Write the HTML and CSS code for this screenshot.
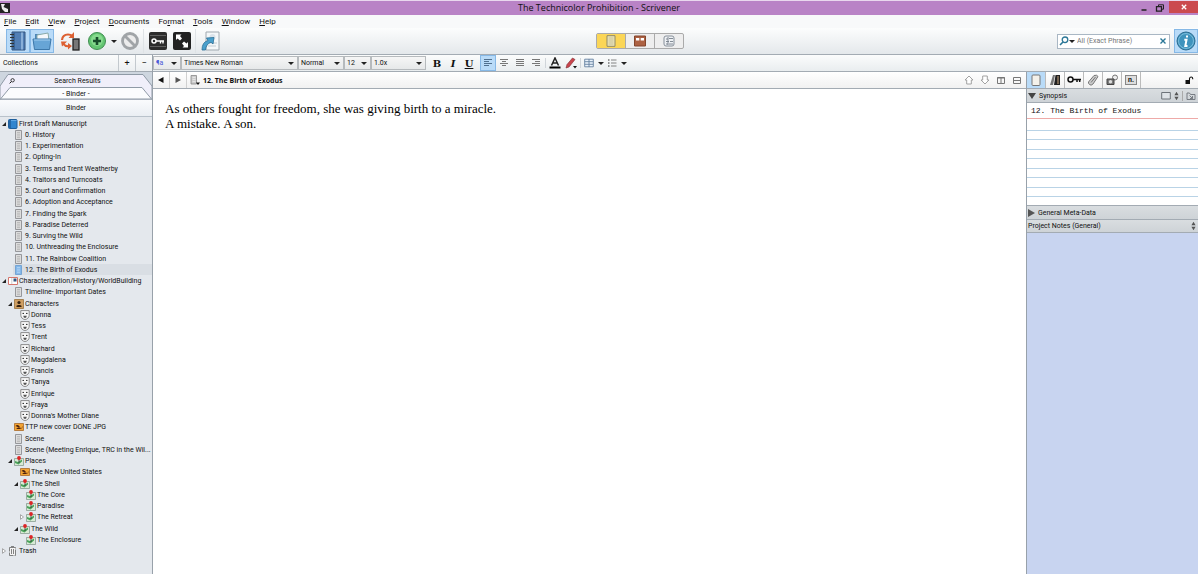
FILE: index.html
```
<!DOCTYPE html>
<html lang="en">
<head>
  <meta charset="UTF-8" />
  <meta name="viewport" content="width=device-width, initial-scale=1.0" />
  <title>The Technicolor Prohibition - Scrivener</title>
  <link rel="stylesheet" href="styles.css">
</head>
<body>
  <svg class="sprite" aria-hidden="true">
    <symbol id="i-doc" viewBox="0 0 10 10"><path d="M1.5.5h6v9h-6z" fill="#dcdcdc" stroke="#8d8f92" stroke-width=".9"/><path d="M3 2.5h3M3 4.2h3M3 5.9h3M3 7.6h3" stroke="#adadad" stroke-width=".7"/></symbol>
    <symbol id="i-doc-on" viewBox="0 0 10 10"><path d="M1.5.5h6v9h-6z" fill="#84b8ea" stroke="#6e9fd0" stroke-width=".9"/><path d="M3 2.5h3M3 4.2h3M3 5.9h3M3 7.6h3" stroke="#bddaf5" stroke-width=".7"/></symbol>
    <symbol id="i-draft" viewBox="0 0 10 10"><rect x=".5" y=".5" width="8.5" height="9" rx="1" fill="#3286cf" stroke="#1f5f9c"/><path d="M2 1v8" stroke="#174b80"/><path d="M3 1.5h5.500" stroke="#7ab9ee" stroke-width=".7"/></symbol>
    <symbol id="i-world" viewBox="0 0 10 10"><path d="M.5 1.500h9v7h-9z" fill="#fff" stroke="#d4756b"/><path d="M3.800 2v6" stroke="#bbb" stroke-width=".7"/><path d="M5.500 2.500h3v3h-3z" fill="#31557f"/></symbol>
    <symbol id="i-cast" viewBox="0 0 10 10"><path d="M.5.5h9v9h-9z" fill="#cf9f63" stroke="#99713c" stroke-width=".8"/><circle cx="5" cy="3.500" r="1.600" fill="#33200f"/><path d="M2.500 8V6.800L4 6h2l1.500.8V8z" fill="#33200f"/></symbol>
    <symbol id="i-mask" viewBox="0 0 10 10"><path d="M.8.6h8.400v4.700C9.200 7.500 7 9.500 5 9.500S.8 7.500.8 5.300z" fill="#f8f8f8" stroke="#808080" stroke-width=".9"/><path d="M2.500 3.400h1.500M6 3.400h1.500" stroke="#222"/><path d="M3.200 5.800h3.600Q6.500 8 5 8T3.200 5.800z" fill="#555"/></symbol>
    <symbol id="i-pic" viewBox="0 0 10 10"><path d="M.5 1.500h9v7h-9z" fill="#f2a434" stroke="#a8692a" stroke-width=".8"/><path d="M1.500 4q2-2 4 .5t3-.5v1.500H5zM2 7l2-1.500L8.500 7z" fill="#49200f"/></symbol>
    <symbol id="i-place" viewBox="0 0 10 10"><path d="M.5 2.500h9v7h-9z" fill="#d8ead5" stroke="#7d9486" stroke-width=".7"/><path d="M1 5l3 1 4-2.500v2L4.500 8.500 1 7z" fill="#4aa35b"/><path d="M5 3v4" stroke="#333" stroke-width=".8"/><circle cx="5" cy="2" r="1.900" fill="#dd2525"/></symbol>
    <symbol id="i-trash" viewBox="0 0 10 10"><path d="M1.500 1.500h6v8h-6z" fill="#f4f4f4" stroke="#666" stroke-width=".8" stroke-dasharray="7 1"/><path d="M3.500 3v5M5.500 3v5M3 .5h3" stroke="#666" stroke-width=".8"/></symbol>
    <symbol id="i-lens" viewBox="0 0 10 10"><circle cx="6" cy="3.800" r="2.800" fill="none" stroke="currentColor" stroke-width="1.300"/><path d="M4 6L1 9" stroke="currentColor" stroke-width="1.600"/></symbol>
    <symbol id="i-updown" viewBox="0 0 6 10"><path d="M3 0l2.500 4h-5zM3 10l2.500-4h-5z" fill="#555"/></symbol>
  </svg>

  <header class="titlebar">
    <svg class="app-icon" viewBox="0 0 10 10"><path d="M0 0h10v10H0z" fill="#222"/><path d="M1 1h4L3.500 4 8 6v3H5L2 6z" fill="#eee"/></svg>
    <h1>The Technicolor Prohibition - Scrivener</h1>
    <div class="window-buttons">
      <button aria-label="Minimize"><svg viewBox="0 0 10 10"><path d="M2.500 7h5" stroke="#222" stroke-width="1.500"/></svg></button>
      <button aria-label="Restore"><svg viewBox="0 0 10 10"><path d="M3.500 3V1.800h5v4.400H7" fill="none" stroke="#222"/><path d="M1.500 3.700h5v4.500h-5z" fill="none" stroke="#222" stroke-width="1.300"/></svg></button>
      <button class="close" aria-label="Close"><svg viewBox="0 0 10 10"><path d="M2.800 2.800l4.400 4.400M7.200 2.800L2.800 7.200" stroke="#fff" stroke-width="1.300"/></svg></button>
    </div>
  </header>

  <nav class="menubar">
    <a href="#"><u>F</u>ile</a>
    <a href="#"><u>E</u>dit</a>
    <a href="#"><u>V</u>iew</a>
    <a href="#"><u>P</u>roject</a>
    <a href="#"><u>D</u>ocuments</a>
    <a href="#">Fo<u>r</u>mat</a>
    <a href="#"><u>T</u>ools</a>
    <a href="#"><u>W</u>indow</a>
    <a href="#"><u>H</u>elp</a>
  </nav>

  <div class="toolbar">
    <div class="tools">
      <button class="tool on" aria-label="Binder"><svg viewBox="0 0 20 20"><path d="M4 1h13v18H4z" fill="#527fb5" stroke="#33557f"/><path d="M14 1.500v17" stroke="#89afd8" stroke-width="2"/><path d="M6 1.500v17" stroke="#3a6496" stroke-width="2"/><path d="M2 3.500h4M2 6.500h4M2 9.500h4M2 12.500h4M2 15.500h4" stroke="#333" stroke-width="1.200"/></svg></button>
      <button class="tool on" aria-label="Collections"><svg viewBox="0 0 20 20"><path d="M3 8V3h5l1.500 2H17v4z" fill="#4c86b8"/><path d="M5 4l11-2 1 7H5z" fill="#f5f8fb" stroke="#8aa"/><path d="M1 8h18l-1.500 10.500h-15z" fill="#67a5d6" stroke="#3d78aa"/><path d="M2 9h16" stroke="#a4d0f0"/></svg></button>
      <button class="tool sync" aria-label="Sync"><svg viewBox="0 0 20 20"><path d="M2 9q.5-5.500 6-5.500 2.500 0 4.500 1.500M10 15q-4.500 1-6.500-2" fill="none" stroke="#dd6032" stroke-width="2.200"/><path d="M14 1v6H8.500zM1 10.500h6L2 15.500zM8 12l4 3-4 3.500z" fill="#dd6032"/><rect x="13" y="8" width="6" height="11" fill="#777" stroke="#222" stroke-width="1.300"/></svg></button>
      <button class="tool add" aria-label="Add"><svg viewBox="0 0 20 20"><circle cx="10" cy="10" r="8.500" fill="#64c572" stroke="#3f8e50"/><circle cx="10" cy="9" r="6" fill="#86db8e"/><path d="M10 6v8M6 10h8" stroke="#174d2a" stroke-width="2.600"/></svg><i class="caret"></i></button>
      <button class="tool" aria-label="Trash"><svg viewBox="0 0 20 20"><circle cx="10" cy="10" r="7.500" fill="#ececec" stroke="#a0a4a7" stroke-width="2.800"/><path d="M4.500 4.500l11 11" stroke="#a0a4a7" stroke-width="2.800"/></svg></button>
      <span class="sep"></span>
      <button class="tool" aria-label="Keywords"><svg viewBox="0 0 20 20"><rect x="1" y="1" width="18" height="18" rx="2" fill="#2c2c2c"/><path d="M2 4.500h16M2 15.500h16" stroke="#777" stroke-width=".7"/><circle cx="6" cy="10" r="2" fill="none" stroke="#fff" stroke-width="1.500"/><path d="M8 10h8M12.500 10v2.500M15 10v2.500" stroke="#fff" stroke-width="1.400"/></svg></button>
      <button class="tool" aria-label="Full screen"><svg viewBox="0 0 20 20"><rect x="1" y="1" width="18" height="18" rx="2" fill="#222"/><path d="M4 3.500h5.500L8 5l2 2.500L8 9.500 5.500 7.500 4 9zM16 16.500h-5.500L12 15l-2-2.500 2-2 2.500 2L16 11z" fill="#fff"/></svg></button>
      <span class="sep"></span>
      <button class="tool" aria-label="Compile"><svg viewBox="0 0 20 20"><path d="M6 1h13v18H6z" fill="#f4f7f9" stroke="#a0a9b0"/><circle cx="12.500" cy="6" r="3" fill="#dbe3ea"/><path d="M8 15h8M10 12h7" stroke="#c3ccd3"/><path d="M2 19q0-8 6-9.500L6.500 7 14 6.500 13 13l-2-1.800Q6 13 5.500 19z" fill="#4aa0cd" stroke="#286d96" stroke-width=".8"/></svg></button>
    </div>

    <div class="view-modes">
      <button class="on" aria-label="Document"><svg viewBox="0 0 12 12"><path d="M2 .7h8v10.600H2z" fill="#eee6b8" stroke="#8f8966"/><path d="M3.500 3h5M3.500 5h5M3.500 7h5M3.500 9h5" stroke="#b9b594" stroke-width=".8"/></svg></button>
      <button aria-label="Corkboard"><svg viewBox="0 0 12 12"><path d="M.5 1h11v10H.5z" fill="#ad6142" stroke="#83452c"/><path d="M2 3h3.300v2.500H2zM6.700 3H10v2.500H6.700z" fill="#fff"/></svg></button>
      <button aria-label="Outliner"><svg viewBox="0 0 12 12"><rect x="1" y="1" width="10" height="10" rx="2" fill="#eef1f4" stroke="#87909a"/><path d="M3 4h2M6 3.500h4M3 6.500h3M7 6.500h3M3 9h2M6 9h4M5 2v8" stroke="#76808b" stroke-width=".9"/></svg></button>
    </div>

    <div class="search-side">
      <label class="search">
        <svg class="ico" viewBox="0 0 10 10"><use href="#i-lens"/></svg><i class="caret"></i>
        <input type="text" placeholder="All (Exact Phrase)" aria-label="Search" />
        <button aria-label="Clear"><svg viewBox="0 0 10 10"><path d="M2.500 2.500l5 5M7.500 2.500l-5 5" stroke="#2b7797" stroke-width="1.400"/></svg></button>
      </label>
      <button class="tool on" aria-label="Inspector"><svg viewBox="0 0 20 20"><circle cx="10" cy="10" r="9" fill="#3f93bd" stroke="#2a6c91"/><circle cx="10" cy="10" r="7.500" fill="none" stroke="#8ac6e2" stroke-width=".8"/><path d="M11 4.500v2M8.300 8.800h2.200L9.300 15h2.200" fill="none" stroke="#fff" stroke-width="2"/></svg></button>
    </div>
  </div>

  <div class="workspace">
    <aside class="binder">
      <div class="collections">
        <h2>Collections</h2>
        <button>+</button>
        <button>−</button>
      </div>
      <div class="tabs">
        <svg class="tab-lines" viewBox="0 0 152 28" preserveAspectRatio="none"><path d="M0 28V14L8 2.500h135l9 11.500v14z" fill="#f0effa" stroke="#8f9aa6"/><path d="M.5 27L10 15.500h132L151.500 27z" fill="#fbfcfe" stroke="#8f9aa6"/></svg>
        <button class="tab"><svg class="ico" viewBox="0 0 10 10"><use href="#i-lens"/></svg><span>Search Results</span></button>
        <button class="tab"><span>- Binder -</span></button>
      </div>
      <h3>Binder</h3>
      <ul class="tree" id="tree"></ul>
    </aside>

    <div class="main">
      <div class="formatbar">
        <label class="pick style"><select aria-label="Style"><option>¶a</option></select></label>
        <label class="pick font"><select aria-label="Font"><option>Times New Roman</option></select></label>
        <label class="pick weight"><select aria-label="Variant"><option>Normal</option></select></label>
        <label class="pick size"><select aria-label="Size"><option>12</option></select></label>
        <label class="pick spacing"><select aria-label="Line spacing"><option>1.0x</option></select></label>
        <div class="format-buttons">
          <button class="letter"><b>B</b></button>
          <button class="letter"><i>I</i></button>
          <button class="letter"><u>U</u></button>
          <button class="on" aria-label="Align left"><svg viewBox="0 0 10 10"><path d="M1 1.500h8M1 3.500h5M1 5.500h8M1 7.500h5" stroke="#50708f"/></svg></button>
          <button aria-label="Center"><svg viewBox="0 0 10 10"><path d="M1 1.500h8M3 3.500h4M1 5.500h8M3 7.500h4" stroke="#777"/></svg></button>
          <button aria-label="Justify"><svg viewBox="0 0 10 10"><path d="M1 1.500h8M1 3.500h8M1 5.500h8M1 7.500h8" stroke="#777"/></svg></button>
          <button aria-label="Align right"><svg viewBox="0 0 10 10"><path d="M1 1.500h8M4 3.500h5M1 5.500h8M4 7.500h5" stroke="#777"/></svg></button>
          <span class="sep"></span>
          <button aria-label="Text color"><svg class="big" viewBox="0 0 12 12"><path d="M2.500 8.500L6 1l3.500 7.500M4 6h4" fill="none" stroke="#222" stroke-width="1.500"/><path d="M.5 10.500h11" stroke="#000" stroke-width="2"/></svg></button>
          <button aria-label="Highlight"><svg class="big" viewBox="0 0 12 12"><path d="M1 11l1-3.500L7.500 1 10 2.500 4 10z" fill="#c9444c" stroke="#7d2d33" stroke-width=".6"/><path d="M8 9h4l-2 2.500z" fill="#111"/></svg></button>
          <span class="sep"></span>
          <button class="wide" aria-label="Table"><svg viewBox="0 0 10 10"><path d="M.7 1.200h8.600v7.600H.7zM5 1v8M.7 3.700h8.600M.7 6.300h8.600" fill="#eaf2fb" stroke="#6782a0" stroke-width=".9"/></svg><i class="caret"></i></button>
          <button class="wide" aria-label="List"><svg viewBox="0 0 10 10"><path d="M1 2h1.500M1 5h1.500M1 8h1.500" stroke="#333" stroke-width="1.200"/><path d="M4 2h5.500M4 5h5.500M4 8h5.500" stroke="#777" stroke-width=".9"/></svg><i class="caret"></i></button>
        </div>
      </div>

      <div class="panes">
        <main class="editor">
          <div class="editor-head">
            <button aria-label="Back"><svg viewBox="0 0 10 10"><path d="M7.500 2v6L2 5z" fill="#111"/></svg></button>
            <button aria-label="Forward"><svg viewBox="0 0 10 10"><path d="M2.500 2v6L8 5z" fill="#555"/></svg></button>
            <svg class="ico head-doc" viewBox="0 0 10 10"><path d="M1 .5h5.500v8.500H1z" fill="#ccc" stroke="#888" stroke-width=".8"/><path d="M2.500 2.500h3M2.500 4.500h3M2.500 6.500h3" stroke="#eee" stroke-width=".7"/><path d="M6 7.500h4L8 10z" fill="#111"/></svg>
            <h2>12. The Birth of Exodus</h2>
            <div class="head-tools">
              <button aria-label="Previous document"><svg viewBox="0 0 10 10"><path d="M5 1l4 4H7.300v4H2.700V5H1z" fill="#fff" stroke="#999" stroke-width=".9"/></svg></button>
              <button aria-label="Next document"><svg viewBox="0 0 10 10"><path d="M5 9L1 5h1.700V1h4.600v4H9z" fill="#fff" stroke="#999" stroke-width=".9"/></svg></button>
              <button aria-label="Split vertically"><svg viewBox="0 0 10 10"><path d="M1.500 2.500h7v6h-7zM5 2v6M1 3h8" fill="none" stroke="#777"/></svg></button>
              <button aria-label="Split horizontally"><svg viewBox="0 0 10 10"><path d="M1.500 2.500h7v6h-7zM1 5.500h8" fill="none" stroke="#777"/></svg></button>
            </div>
          </div>
          <textarea class="page" aria-label="Document text" spellcheck="false">As others fought for freedom, she was giving birth to a miracle.
A mistake. A son.</textarea>
        </main>

        <aside class="inspector">
          <div class="inspector-tabs">
            <button class="on" aria-label="Notes"><svg viewBox="0 0 12 12"><rect x="2" y="1" width="8" height="10.500" rx="1" fill="#f4f1ea" stroke="#777"/></svg></button>
            <button aria-label="References"><svg viewBox="0 0 12 12"><path d="M1 11L4 1h2L4 11z" fill="#777"/><path d="M5 11L6.500 1H11v10z" fill="#222"/><path d="M9 2v8" stroke="#c8a57e"/></svg></button>
            <button class="key" aria-label="Keywords"><svg viewBox="0 0 14 12"><circle cx="3.500" cy="5.500" r="2.500" fill="none" stroke="#111" stroke-width="1.500"/><path d="M6 5.500h8M10 5.500v2.500M12.700 5.500v2.500" stroke="#111" stroke-width="1.500"/></svg></button>
            <button aria-label="Custom metadata"><svg viewBox="0 0 12 12"><path d="M1.500 8L7 1.500q3-1 4 1L6 10q-2 2-3.500.5t-1-2.500z" fill="#ccc" stroke="#777"/><path d="M4 8.500L8.500 3" stroke="#777"/></svg></button>
            <button aria-label="Snapshots"><svg viewBox="0 0 12 12"><circle cx="9" cy="3.500" r="2.500" fill="#eee" stroke="#777"/><path d="M1 5h7v5.500H1z" fill="#777" stroke="#444"/><circle cx="4.500" cy="7.700" r="1.700" fill="#ddd"/></svg></button>
            <button class="comments" aria-label="Comments"><span>n.</span></button>
            <button class="lock" aria-label="Lock"><svg viewBox="0 0 12 12"><path d="M2.500 6h4.500v4H2.500z" fill="#111"/><path d="M6.500 6V4.500q.3-1.500 1.700-1.500t1.500 1.500v.8" fill="none" stroke="#111" stroke-width="1.100"/></svg></button>
          </div>
          <div class="section-head">
            <i class="caret down"></i><h3>Synopsis</h3>
            <button aria-label="Index card"><svg viewBox="0 0 10 10"><path d="M.7 1.500h8.600v6.500H.7z" fill="#dfe3e7" stroke="#6d7379"/></svg></button>
            <button class="slim" aria-label="Toggle card"><svg viewBox="0 0 6 10"><use href="#i-updown"/></svg></button>
            <button class="ruled" aria-label="Auto-generate"><svg viewBox="0 0 10 10"><path d="M1 8.500V2h2.500l1 1.500H9v5zM3.500 4.500l3 3M6.500 5v2.500H4" fill="none" stroke="#6d7379" stroke-width=".9"/></svg></button>
          </div>
          <div class="card">
            <input type="text" value="12. The Birth of Exodus" aria-label="Synopsis title" spellcheck="false" />
            <textarea aria-label="Synopsis"></textarea>
          </div>
          <div class="section-head meta"><i class="caret side"></i><h3>General Meta-Data</h3></div>
          <div class="section-head notes-head"><h3>Project Notes (General)</h3><button class="slim" aria-label="Choose notes"><svg viewBox="0 0 6 10"><use href="#i-updown"/></svg></button></div>
          <textarea class="notes" aria-label="Project notes"></textarea>
        </aside>
      </div>
    </div>
  </div>

  <script>
    // level, icon, title, arrow ("open" / "closed")
    const items = [
      [0, "draft", "First Draft Manuscript", "open"],
      [1, "doc", "0. History"],
      [1, "doc", "1. Experimentation"],
      [1, "doc", "2. Opting-In"],
      [1, "doc", "3. Terms and Trent Weatherby"],
      [1, "doc", "4. Traitors and Turncoats"],
      [1, "doc", "5. Court and Confirmation"],
      [1, "doc", "6. Adoption and Acceptance"],
      [1, "doc", "7. Finding the Spark"],
      [1, "doc", "8. Paradise Deterred"],
      [1, "doc", "9. Surving the Wild"],
      [1, "doc", "10. Unthreading the Enclosure"],
      [1, "doc", "11. The Rainbow Coalition"],
      [1, "doc-on", "12. The Birth of Exodus"],
      [0, "world", "Characterization/History/WorldBuilding", "open"],
      [1, "doc", "Timeline- Important Dates"],
      [1, "cast", "Characters", "open"],
      [2, "mask", "Donna"],
      [2, "mask", "Tess"],
      [2, "mask", "Trent"],
      [2, "mask", "Richard"],
      [2, "mask", "Magdalena"],
      [2, "mask", "Francis"],
      [2, "mask", "Tanya"],
      [2, "mask", "Enrique"],
      [2, "mask", "Fraya"],
      [2, "mask", "Donna's Mother Diane"],
      [1, "pic", "TTP new cover DONE JPG"],
      [1, "doc", "Scene"],
      [1, "doc", "Scene (Meeting Enrique, TRC in the Wil..."],
      [1, "place", "Places", "open"],
      [2, "pic", "The New United States"],
      [2, "place", "The Shell", "open"],
      [3, "place", "The Core"],
      [3, "place", "Paradise"],
      [3, "place", "The Retreat", "closed"],
      [2, "place", "The Wild", "open"],
      [3, "place", "The Enclosure"],
      [0, "trash", "Trash", "closed"]
    ];

    const arrows = {
      open: '<path d="M5 1v4H1z" fill="#222"/>',
      closed: '<path d="M1.500 .7v4.600L4.500 3z" fill="#fff" stroke="#888" stroke-width=".7"/>'
    };

    const tree = document.getElementById("tree");
    items.forEach(([level, icon, title, arrow]) => {
      const li = document.createElement("li");
      li.className = `level-${level}`;
      if (icon === "doc-on") li.classList.add("selected");
      li.innerHTML = `
        <svg class="arrow" viewBox="0 0 6 6">${arrows[arrow] || ""}</svg>
        <svg class="ico" viewBox="0 0 10 10"><use href="#i-${icon}"/></svg>
        <span>${title}</span>
      `;
      tree.appendChild(li);
    });
  </script>
</body>
</html>
```

FILE: styles.css
```
:root {
  --ui: Roboto, "DejaVu Sans Condensed", sans-serif;
  --line: #a3abb3;
  --blue: #b9dbf8;
  --blue-line: #86b8e6;
  --text: #111;
}
* {
  margin: 0;
  padding: 0;
  box-sizing: border-box;
}
body {
  display: flex;
  flex-direction: column;
  height: 100vh;
  padding-right: 2px;
  background: #fff;
  color: var(--text);
  font-family: var(--ui);
  font-size: 7px;
  overflow: hidden;
}
h1, h2, h3 {
  font-size: inherit;
  font-weight: normal;
}
button {
  display: flex;
  align-items: center;
  justify-content: center;
  border: none;
  background: none;
  color: inherit;
  font: inherit;
}
input, textarea, select {
  border: none;
  outline: none;
  background: transparent;
  color: inherit;
  font: inherit;
  min-width: 0;
}
textarea {
  display: block;
  resize: none;
}
button svg {
  width: 10px;
  height: 10px;
}
.sprite {
  display: none;
}
.ico {
  width: 10px;
  height: 10px;
  flex: none;
}
.caret {
  flex: none;
  border: 3px solid transparent;
  border-top-color: #222;
  border-bottom: none;
}
.sep {
  width: 1px;
  align-self: stretch;
  background: #d0d5da;
}

/* title and menu */
.titlebar {
  display: grid;
  grid-template-columns: 1fr auto 1fr;
  align-items: center;
  height: 15px;
  flex: none;
  border-top: 1px solid #e9d8ee;
  background: #b983c6;
}
.app-icon {
  width: 10px;
  height: 10px;
}
.titlebar h1 {
  font-family: "Open Sans", sans-serif;
  font-size: 9px;
  line-height: 14px;
}
.window-buttons {
  display: flex;
  justify-content: flex-end;
  height: 14px;
}
.window-buttons button {
  width: 16px;
}
.window-buttons .close {
  width: 29px;
  margin-left: 1px;
  height: 12px;
  background: #cb4a4f;
}
.menubar {
  display: flex;
  align-items: center;
  gap: 9px;
  height: 13px;
  flex: none;
  padding-left: 4px;
  background: #f8f9fa;
}
.menubar a {
  color: var(--text);
  font-size: 8px;
  line-height: 12px;
  text-decoration: none;
}

/* toolbar */
.toolbar {
  display: flex;
  justify-content: space-between;
  align-items: center;
  height: 27px;
  flex: none;
  padding-left: 6px;
  border-bottom: 1px solid var(--line);
  background: linear-gradient(#fcfdfd, #e4e8eb);
}
.tools {
  display: flex;
  align-items: center;
  height: 24px;
}
.tool {
  width: 24px;
  height: 24px;
}
.tool svg {
  width: 20px;
  height: 20px;
  flex: none;
}
.tool.on {
  border: 1px solid var(--blue-line);
  background: var(--blue);
}
.tools .sep {
  margin: 0 2px 0 1px;
  background: #dfe3e6;
}
.tools .sync {
  margin: 0 4px;
}
.tools .add {
  width: 32px;
  gap: 4px;
}
.view-modes {
  display: flex;
  height: 16px;
  border: 1px solid #aaa;
  border-radius: 2px;
  background: #eee;
}
.view-modes button {
  width: 28px;
}
.view-modes button + button {
  width: 29px;
  border-left: 1px solid #aaa;
}
.view-modes .on {
  background: #fbd657;
}
.view-modes svg {
  width: 12px;
  height: 12px;
}
.search-side {
  display: flex;
  align-items: center;
  gap: 4px;
}
.search {
  display: flex;
  align-items: center;
  width: 113px;
  height: 15px;
  padding: 0 1px;
  border: 1px solid #a9b7c4;
  background: #fff;
  color: #2b7797;
}
.search input {
  flex: 1;
  margin-left: 2px;
}
.search input::placeholder {
  color: #777;
}

/* binder */
.workspace {
  display: flex;
  flex: 1;
  min-height: 0;
}
.binder {
  display: flex;
  flex-direction: column;
  width: 153px;
  flex: none;
  border-right: 1px solid #98a1aa;
  background: #e4e8ed;
}
.collections {
  display: flex;
  height: 17px;
  flex: none;
  border-bottom: 1px solid var(--line);
  background: linear-gradient(#fbfcfc, #eceff1);
}
.collections h2 {
  flex: 1;
  padding-left: 3px;
  line-height: 16px;
}
.collections button {
  width: 17px;
  border-left: 1px solid #c3c9ce;
  font-size: 9px;
}
.tabs {
  display: grid;
  grid-template-rows: 16px 12px;
  height: 28px;
  flex: none;
  background: #ced6df;
}
.tab-lines {
  grid-area: 1 / 1 / 3 / 2;
  width: 100%;
  height: 28px;
}
.tab {
  grid-column: 1;
  grid-row: 2;
  z-index: 1;
}
.tab:has(.ico) {
  grid-row: 1;
  padding: 2px 12px 0 9px;
}
.tab .ico {
  width: 6px;
  height: 6px;
}
.tab span {
  flex: 1;
}
.binder h3 {
  height: 17px;
  flex: none;
  border-bottom: 1px solid #b9c2cb;
  background: linear-gradient(#fafbfd, #eaeef3);
  line-height: 17px;
  text-align: center;
}
.tree {
  padding-top: 1px;
  list-style: none;
  overflow: hidden;
}
.tree li {
  display: flex;
  align-items: center;
  height: 11px;
  padding-left: 1px;
  white-space: nowrap;
}
.tree li:nth-child(4n) {
  height: 12px;
}
.tree .level-1 {
  padding-left: 7px;
}
.tree .level-2 {
  padding-left: 13px;
}
.tree .level-3 {
  padding-left: 19px;
}
.tree .arrow {
  width: 6px;
  height: 6px;
  flex: none;
}
.tree .ico {
  margin: 0 1px;
}
.tree .selected {
  background: linear-gradient(#d9dee4, #d9dee4) 13px 0 no-repeat;
}

/* format bar */
.main {
  display: flex;
  flex-direction: column;
  flex: 1;
  min-width: 0;
}
.formatbar {
  display: flex;
  height: 17px;
  flex: none;
  border-bottom: 1px solid var(--line);
  background: linear-gradient(#fbfcfc, #e9edef);
}
.pick {
  display: flex;
  align-items: center;
  height: 14px;
  margin-top: 1px;
  padding: 0 3px 0 2px;
  border: 1px solid #b6babd;
  background: linear-gradient(#f6f6f6, #e6e8e9);
}
.pick::after {
  content: "";
  border: 3px solid transparent;
  border-top-color: #222;
  border-bottom: none;
}
.pick select {
  flex: 1;
  appearance: none;
}
.style {
  width: 28px;
  color: #4b5bd8;
}
.font {
  width: 117px;
}
.weight {
  width: 46px;
}
.size {
  width: 27px;
}
.spacing {
  width: 55px;
}
.format-buttons {
  display: flex;
  padding-left: 3px;
}
.format-buttons button {
  width: 16px;
}
.format-buttons .letter {
  font-family: "DejaVu Serif", serif;
  font-size: 10px;
  font-weight: bold;
}
.format-buttons .on {
  margin-left: 3px;
  border: 1px solid var(--blue-line);
  background: var(--blue);
}
.format-buttons .big {
  width: 12px;
  height: 12px;
}
.format-buttons .wide {
  width: 23px;
  gap: 4px;
}
.format-buttons .sep {
  margin: 3px 1px;
}

/* editor */
.panes {
  display: flex;
  flex: 1;
  min-height: 0;
}
.editor {
  display: flex;
  flex-direction: column;
  flex: 1;
  min-width: 0;
}
.editor-head {
  display: flex;
  align-items: center;
  height: 17px;
  flex: none;
  border-bottom: 1px solid var(--line);
  background: linear-gradient(#fff, #f1f1f1);
}
.editor-head > button {
  width: 17px;
  height: 16px;
  border-right: 1px solid #d0d0d0;
}
.head-doc {
  margin: 0 3px;
}
.editor-head h2 {
  flex: 1;
  font-family: "Open Sans", sans-serif;
  font-weight: bold;
}
.head-tools {
  display: flex;
  gap: 6px;
  padding-right: 4px;
}
.page {
  flex: 1;
  padding: 12px;
  background: #fff;
  color: #000;
  font: 13px/15px "Liberation Serif", serif;
}

/* inspector */
.inspector {
  display: flex;
  flex-direction: column;
  width: 172px;
  flex: none;
  border-left: 1px solid #98a1aa;
}
.inspector-tabs {
  display: flex;
  height: 16px;
  flex: none;
  background: linear-gradient(#fff, #f1f1f1);
}
.inspector-tabs button {
  width: 19px;
  border-right: 1px solid #bbb;
}
.inspector-tabs svg {
  width: 12px;
  height: 12px;
}
.inspector-tabs .key svg {
  width: 14px;
}
.inspector-tabs .on {
  background: var(--blue);
}
.comments span {
  padding: 0 2px;
  border: 1px solid #888;
  background: #ddd;
  font-weight: bold;
  line-height: 8px;
}
.inspector-tabs .lock {
  margin-left: auto;
  border: none;
}
.section-head {
  display: flex;
  align-items: center;
  gap: 3px;
  height: 14px;
  flex: none;
  padding: 0 2px 0 1px;
  border-top: 1px solid var(--line);
  background: linear-gradient(#d9dde0, #ced3d7);
}
.section-head h3 {
  flex: 1;
}
.section-head .down {
  border-width: 6px 4px 0;
  border-top-color: #444;
}
.section-head .side {
  border: 4px solid transparent;
  border-width: 4px 0 4px 7px;
  border-left-color: #555;
}
.section-head .slim svg {
  width: 5px;
}
.section-head .ruled {
  padding-left: 3px;
  border-left: 1px solid #aaa;
}
.card {
  border-top: 1px solid var(--line);
}
.card input {
  display: block;
  width: 100%;
  height: 16px;
  padding-left: 4px;
  border-bottom: 1px solid #eeaaa8;
  font: 8px "Liberation Mono", monospace;
}
.card textarea {
  width: 100%;
  height: 86px;
  background: repeating-linear-gradient(#fff 0 9px, #b9d3e6 9px 10px, #fff 10px 18px, #b9d3e6 18px 19px) 0 2px no-repeat;
}
.notes-head {
  border-bottom: 1px solid var(--line);
}
.notes {
  flex: 1;
  background: #c8d4f0;
}
```
